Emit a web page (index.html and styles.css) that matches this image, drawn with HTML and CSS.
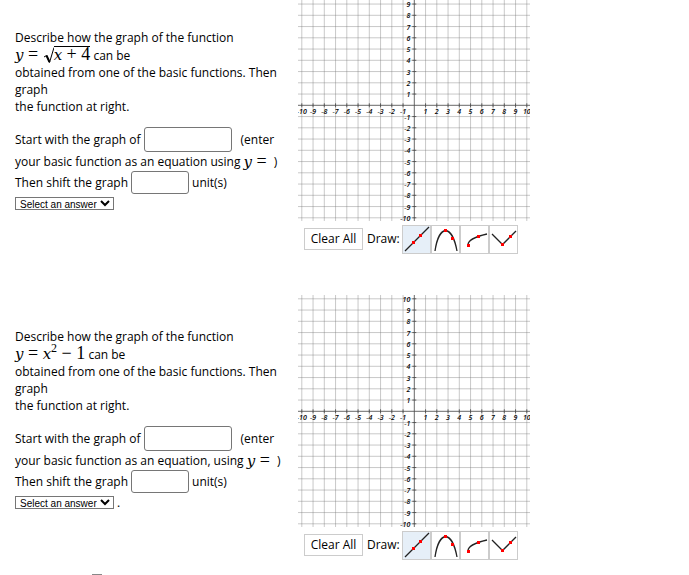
FILE: index.html
```html
<!DOCTYPE html>
<html lang="en">
<head>
    <meta charset="UTF-8">
    <meta name="viewport" content="width=device-width, initial-scale=1.0">
    <title>Graph Transformations</title>
    <link rel="stylesheet" href="styles.css">
</head>
<body>

    <div class="question">
        <form class="prompt">
            <p>Describe how the graph of the function<br>
            <span class="math"><i>y</i> = <svg class="radical" viewBox="0 0 11 17"><path d="M1 10 L3.500 8.500 L6.500 15.500 L11 0.500" /><path class="thick" d="M3.500 8.500 L6.500 15" /></svg><span class="root"><i>x</i> + 4</span></span> can be<br>
            obtained from one of the basic functions. Then graph<br>
            the function at right.</p>

            <div class="line tall">
                <label for="basic1">Start with the graph of</label>
                <input type="text" id="basic1" class="equation">
                <span>(enter</span>
            </div>
            <div class="line">your basic function as an equation using <span class="math var"><i>y</i> =</span> )</div>
            <div class="line shift">
                <label for="units1">Then shift the graph</label>
                <input type="text" id="units1" class="units">
                <span>unit(s)</span>
            </div>
            <div class="line">
                <select aria-label="Direction">
                    <option>Select an answer</option>
                    <option>up</option>
                    <option>down</option>
                    <option>left</option>
                    <option>right</option>
                </select>
            </div>
        </form>

        <div class="graph">
            <svg class="grid" viewBox="0 0 232 232"></svg>
            <div class="tools">
                <button type="button" class="clear">Clear All</button>
                <span class="draw">Draw:</span>
                <button type="button" class="tool active" aria-label="Line"><svg viewBox="1 1 27 27"><path d="M3 26 L27 2" /><rect x="10" y="16" width="3" height="3" /><rect x="17" y="9" width="3" height="3" /></svg></button>
                <button type="button" class="tool" aria-label="Parabola"><svg viewBox="1 1 27 27"><path d="M4 26 C8 -1 21 -1 26 26" /><rect x="13" y="4" width="3" height="3" /><rect x="20" y="12" width="3" height="3" /></svg></button>
                <button type="button" class="tool" aria-label="Square root"><svg viewBox="1 1 27 27"><path d="M8 20 C8 14 18 11 27 9" /><rect x="7" y="19" width="3" height="3" /><rect x="17" y="10" width="3" height="3" /></svg></button>
                <button type="button" class="tool" aria-label="Absolute value"><svg viewBox="1 1 27 27"><path d="M3 9 L13.500 19.500 L27 6" /><rect x="12" y="18" width="3" height="3" /><rect x="20" y="10" width="3" height="3" /></svg></button>
            </div>
        </div>
    </div>

    <div class="question second">
        <form class="prompt">
            <p>Describe how the graph of the function<br>
            <span class="math"><i>y</i> = <i>x</i><sup>2</sup> − 1</span> can be<br>
            obtained from one of the basic functions. Then graph<br>
            the function at right.</p>

            <div class="line tall">
                <label for="basic2">Start with the graph of</label>
                <input type="text" id="basic2" class="equation">
                <span>(enter</span>
            </div>
            <div class="line">your basic function as an equation, using <span class="math var"><i>y</i> =</span> )</div>
            <div class="line shift">
                <label for="units2">Then shift the graph</label>
                <input type="text" id="units2" class="units">
                <span>unit(s)</span>
            </div>
            <div class="line">
                <select aria-label="Direction">
                    <option>Select an answer</option>
                    <option>up</option>
                    <option>down</option>
                    <option>left</option>
                    <option>right</option>
                </select>
                <span>.</span>
            </div>
        </form>

        <div class="graph">
            <svg class="grid" viewBox="0 0 232 232"></svg>
            <div class="tools">
                <button type="button" class="clear">Clear All</button>
                <span class="draw">Draw:</span>
                <button type="button" class="tool active" aria-label="Line"><svg viewBox="1 1 27 27"><path d="M3 26 L27 2" /><rect x="10" y="16" width="3" height="3" /><rect x="17" y="9" width="3" height="3" /></svg></button>
                <button type="button" class="tool" aria-label="Parabola"><svg viewBox="1 1 27 27"><path d="M4 26 C8 -1 21 -1 26 26" /><rect x="13" y="4" width="3" height="3" /><rect x="20" y="12" width="3" height="3" /></svg></button>
                <button type="button" class="tool" aria-label="Square root"><svg viewBox="1 1 27 27"><path d="M8 20 C8 14 18 11 27 9" /><rect x="7" y="19" width="3" height="3" /><rect x="17" y="10" width="3" height="3" /></svg></button>
                <button type="button" class="tool" aria-label="Absolute value"><svg viewBox="1 1 27 27"><path d="M3 9 L13.500 19.500 L27 6" /><rect x="12" y="18" width="3" height="3" /><rect x="20" y="10" width="3" height="3" /></svg></button>
            </div>
        </div>
    </div>

    <div class="next"></div>

    <script src="grid.js"></script>

</body>
</html>
```
FILE: styles.css
```css
* {
    margin: 0;
    padding: 0;
    box-sizing: border-box;
}

body {
    background: white;
    color: #000;
    font-family: "Open Sans", sans-serif;
    font-size: 12px;
    line-height: 17px;
    margin-top: -11px;
    padding-left: 15px;
}

.question {
    display: flex;
    align-items: flex-start;
    gap: 16px;
    height: 306px;
}

.prompt {
    flex: 0 0 267px;
    min-width: 0;
    padding-top: 40px;
}

.second {
    height: auto;
}

.second .prompt {
    padding-top: 33px;
}

.prompt p {
    margin-bottom: 12px;
}

/* formulas */
.math {
    font-family: "Liberation Serif", serif;
    font-size: 18px;
    line-height: 16px;
    white-space: nowrap;
}

.math i {
    font-family: "DejaVu Serif", serif;
    font-size: 15px;
    font-style: italic;
    line-height: 14px;
}

.math sup {
    font-size: 12px;
    line-height: 0;
}

.var {
    margin-right: 4px;
}

.radical {
    width: 11px;
    height: 17px;
    vertical-align: -4px;
    fill: none;
    stroke: #000;
}

.radical .thick {
    stroke-width: 2;
}

.root {
    display: inline-block;
    line-height: 14px;
    border-top: 1px solid #000;
}

/* answer lines */
.line {
    display: flex;
    align-items: center;
    height: 18px;
    white-space: pre;
}

.line.tall {
    height: 25px;
}

.line.shift {
    height: 24px;
}

.tall,
.shift {
    gap: 3px;
}

.line input {
    border: 1px solid #767676;
    border-radius: 3px;
    font-size: 12px;
    padding: 2px;
}

.equation {
    width: 88px;
    height: 25px;
    margin-right: 6px;
}

.units {
    width: 58px;
    height: 23px;
}

select {
    width: 99px;
    height: 13px;
    margin-right: 3px;
    border: 1px solid #767676;
    border-radius: 0;
    background: white;
    color: #000;
    font-family: "Liberation Sans", Arial, sans-serif;
    font-size: 10px;
}

/* graph */
.graph {
    flex: none;
}

.grid {
    display: block;
    width: 232px;
    height: 232px;
    margin-bottom: 4px;
}

.grid line {
    stroke: #777;
    stroke-opacity: 0.4;
}

.grid .axis {
    stroke: #444;
    stroke-opacity: 0.8;
}

.grid text {
    font-family: "Open Sans", sans-serif;
    font-size: 7px;
    font-style: italic;
    font-weight: 600;
}

.tools {
    display: flex;
    align-items: center;
    padding-left: 6px;
}

.clear {
    width: 59px;
    height: 22px;
    margin-bottom: 2px;
    border: 1px solid #ccc;
    background: white;
    color: #000;
    font-family: "Open Sans", sans-serif;
    font-size: 12px;
}

.draw {
    width: 39px;
    margin-bottom: 2px;
    padding-left: 4px;
}

.tool {
    width: 29px;
    height: 29px;
    border: 1px solid #ccc;
    background: white;
}

.tool.active {
    background: #e6eff8;
}

.tool svg {
    display: block;
    width: 27px;
    height: 27px;
}

.tool path {
    fill: none;
    stroke: #222;
    stroke-width: 1.3;
}

.tool rect {
    fill: red;
}

/* top edge of the next question's content */
.next {
    width: 10px;
    height: 1px;
    margin: 14px 0 0 77px;
    background: #888;
}
```
FILE: grid.js
```js
const step = 11.25;
const center = 116.3;

function addLine(svg, x1, y1, x2, y2, axis) {
    const line = document.createElementNS("http://www.w3.org/2000/svg", "line");
    line.setAttribute("x1", x1);
    line.setAttribute("y1", y1);
    line.setAttribute("x2", x2);
    line.setAttribute("y2", y2);
    if (axis) line.setAttribute("class", "axis");
    svg.appendChild(line);
}

function addLabel(svg, x, y, anchor, value) {
    const text = document.createElementNS("http://www.w3.org/2000/svg", "text");
    text.setAttribute("x", x);
    text.setAttribute("y", y);
    text.setAttribute("text-anchor", anchor);
    text.textContent = value;
    svg.appendChild(text);
}

document.querySelectorAll(".grid").forEach(svg => {
    for (let i = -10; i <= 10; i++) {
        const x = center + i * step;
        const y = center - i * step;

        addLine(svg, x, 0, x, 232, i === 0);
        addLine(svg, 0, y, 232, y, i === 0);

        // Tick marks and numbers
        if (i !== 0) {
            addLine(svg, x, center - 2, x, center + 2, true);
            addLine(svg, center - 2, y, center + 2, y, true);
            addLabel(svg, x, center + 9, "middle", i);
            addLabel(svg, center - 4, y + 3, "end", i);
        }
    }
});
```
